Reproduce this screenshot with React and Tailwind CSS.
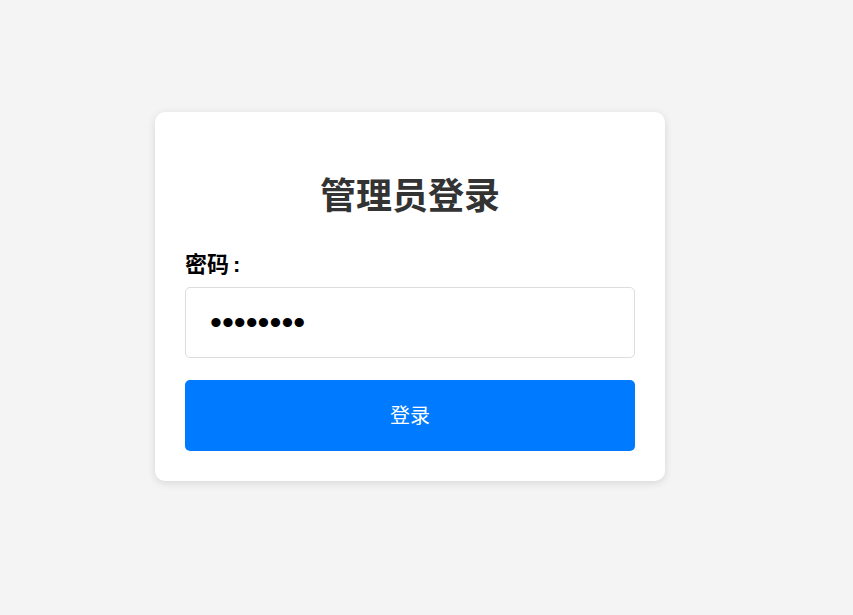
import React, { useState } from "react";

const AdminLogin = () => {
  const [password, setPassword] = useState("12345678");

  const handleSubmit = (e) => {
    e.preventDefault();
  };

  return (
    <div
      className="min-h-screen bg-[#f4f4f4] pt-[112px] pl-[155px]"
      style={{ fontFamily: '"Liberation Sans", "Noto Sans CJK SC", sans-serif' }}
    >
      <form
        onSubmit={handleSubmit}
        className="w-[510px] bg-white rounded-[10px] p-[30px] shadow-[0_2px_8px_rgba(0,0,0,0.12)]"
      >
        <h2 className="mt-[31px] h-[48px] leading-[48px] text-center text-[36px] font-bold text-[#333]">
          管理员登录
        </h2>

        <label className="block mt-[29px] h-[30px] leading-[30px] text-[22px] font-bold text-black">
          密码<span className="ml-[4px]">:</span>
        </label>
        {/* large size so the password dots come out big and tight */}
        <input
          type="password"
          value={password}
          onChange={(e) => setPassword(e.target.value)}
          className="mt-[7px] block w-full h-[71px] px-[24px] border border-[#ddd] rounded-[5px] text-[34px] text-black outline-none"
        />

        <button
          type="submit"
          className="mt-[22px] block w-full h-[71px] bg-[#007bff] rounded-[5px] text-white text-[20px]"
        >
          登录
        </button>
      </form>
    </div>
  );
};

export default AdminLogin;
